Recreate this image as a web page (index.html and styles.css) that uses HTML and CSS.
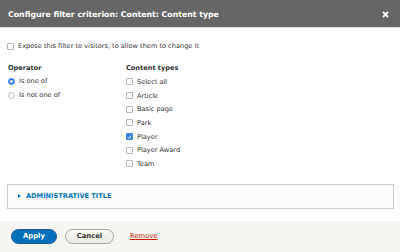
FILE: index.html
```html
<!DOCTYPE html>
<html lang="en">
  <head>
    <meta charset="UTF-8" />
    <title>Configure filter criterion</title>
    <link rel="stylesheet" href="styles.css">
  </head>
  <body>
    <div class="dialog">
      <div class="titlebar">
        <span class="title">Configure filter criterion: Content: Content type</span>
        <span class="close">
          <svg width="7" height="7" viewBox="0 0 7 7"><path d="M1 1L6 6M6 1L1 6" stroke="#fff" stroke-width="1.8" /></svg>
        </span>
      </div>
      <div class="content">
        <label class="option expose"><span class="checkbox"></span>Expose this filter to visitors, to allow them to change it</label>
        <div class="columns">
          <div class="col operator">
            <div class="label">Operator</div>
            <label class="option"><span class="radio checked"></span>Is one of</label>
            <label class="option"><span class="radio"></span>Is not one of</label>
          </div>
          <div class="col types">
            <div class="label">Content types</div>
            <label class="option"><span class="checkbox"></span>Select all</label>
            <label class="option"><span class="checkbox"></span>Article</label>
            <label class="option"><span class="checkbox"></span>Basic page</label>
            <label class="option"><span class="checkbox"></span>Park</label>
            <label class="option"><span class="checkbox checked">
              <svg width="6" height="6" viewBox="0 0 6 6"><path d="M1 3.2L2.4 4.6L5 1.4" stroke="#fff" stroke-width="1.2" fill="none" /></svg>
            </span>Player</label>
            <label class="option"><span class="checkbox"></span>Player Award</label>
            <label class="option"><span class="checkbox"></span>Team</label>
          </div>
        </div>
        <div class="details">
          <span class="arrow"></span>ADMINISTRATIVE TITLE
        </div>
      </div>
      <div class="buttons">
        <span class="button primary">Apply</span>
        <span class="button">Cancel</span>
        <a class="remove" href="#">Remove</a>
      </div>
    </div>
  </body>
</html>
```

FILE: styles.css
```css
body {
  margin: 0;
  font-family: 'DejaVu Sans', Verdana, sans-serif;
  color: #333;
  background: #fff;
}
.dialog {
  width: 400px;
  height: 252px;
  display: flex;
  flex-direction: column;
}
.titlebar {
  height: 28px;
  background: #666;
  border-bottom: 1px solid #ddd;
  display: flex;
  align-items: center;
  justify-content: space-between;
  padding: 1px 11px 0 8px;
  box-sizing: border-box;
}
.title {
  color: #fff;
  font-weight: bold;
  font-size: 7.8px;
}
.close {
  display: flex;
}
.content {
  flex: 1;
  padding: 13px 6px 0 7px;
}
.option {
  display: flex;
  align-items: center;
  font-size: 6.6px;
  height: 14px;
}
.types .option {
  height: 13.7px;
}
.expose {
  height: 10px;
}
.checkbox,
.radio {
  width: 5px;
  height: 5px;
  border: 1px solid #b8b8b8;
  border-radius: 1px;
  margin-right: 4px;
  display: flex;
  align-items: center;
  justify-content: center;
  background: #fff;
}
.checkbox.checked {
  background: #3b7fe0;
  border-color: #3b7fe0;
}
.radio {
  border-radius: 50%;
}
.radio.checked {
  border: 1px solid #2f78e0;
  background: radial-gradient(circle, #fff 1.2px, #2f78e0 1.6px);
}
.columns {
  display: flex;
  margin-top: 10px;
}
.col.operator {
  width: 118px;
  padding-left: 1px;
}
.label {
  font-weight: bold;
  font-size: 6.6px;
  height: 12px;
  display: flex;
  align-items: center;
  margin-top: 1px;
}
.types .label {
  margin-bottom: 1px;
}
.details {
  margin-top: 13px;
  height: 23px;
  border: 1px solid #ccc;
  background: #fcfcfa;
  display: flex;
  align-items: center;
  padding-left: 10px;
  color: #0074bd;
  font-weight: bold;
  font-size: 6.6px;
}
.arrow {
  width: 0;
  height: 0;
  border-left: 3px solid #0074bd;
  border-top: 2px solid transparent;
  border-bottom: 2px solid transparent;
  margin-right: 5px;
}
.buttons {
  height: 31px;
  background: #f5f5f2;
  display: flex;
  align-items: center;
  padding-left: 11px;
  padding-bottom: 1px;
  box-sizing: border-box;
  gap: 8px;
}
.button {
  height: 15px;
  border-radius: 8px;
  border: 1px solid #a6a6a6;
  background: linear-gradient(#f6f6f3, #e8e8e4);
  font-size: 6.8px;
  font-weight: bold;
  display: flex;
  align-items: center;
  justify-content: center;
  width: 49px;
  box-sizing: border-box;
  color: #333;
}
.button.primary {
  background: #0071b8;
  border-color: #1e5c90;
  color: #fff;
  width: 46px;
}
.remove {
  color: #c72100;
  font-size: 6.8px;
  margin-left: 8px;
}
```
